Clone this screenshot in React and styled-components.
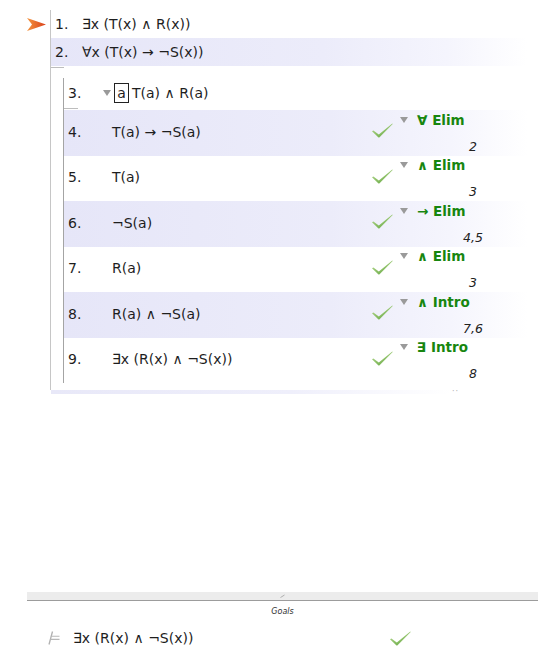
import React from "react";
import styled, { createGlobalStyle } from "styled-components";

const GlobalStyle = createGlobalStyle`
  html, body { margin: 0; padding: 0; background: #ffffff; }
  body { font-family: "DejaVu Sans", "Liberation Sans", sans-serif; color: #1e1e1e; }
`;

const BAND = "linear-gradient(90deg, #e6e6f8 0%, #ececfa 55%, #f5f5fd 80%, rgba(255,255,255,0) 96%)";

const Frame = styled.div`
  width: 555px;
  height: 665px;
  display: flex;
  flex-direction: column;
  overflow: hidden;
  background: #fff;
`;

const ProofPane = styled.div`
  flex: 1;
  padding: 10px 0 0 50px;
  display: flex;
  flex-direction: column;
`;

const Proof = styled.div`
  position: relative;
  width: 496px;
  border-left: 1px solid #c6c6c6;
  display: flex;
  flex-direction: column;
  padding-bottom: 7px;
`;

const Marker = styled.svg`
  position: absolute;
  left: -24px;
  top: 8px;
`;

const Row = styled.div`
  display: flex;
  align-items: center;
  height: ${(p) => p.$h}px;
  background: ${(p) => (p.$band ? BAND : "transparent")};
  font-size: 14px;
  flex-shrink: 0;
`;

const Num = styled.div`
  width: ${(p) => p.$w}px;
  padding-left: 4px;
  box-sizing: border-box;
  flex-shrink: 0;
  align-self: center;
  padding-bottom: ${(p) => (p.$lift ? 2 : 0)}px;
`;

const Formula = styled.div`
  width: ${(p) => p.$w}px;
  flex-shrink: 0;
  white-space: nowrap;
  align-self: center;
  display: flex;
  align-items: center;
  padding-bottom: ${(p) => (p.$lift ? 2 : 0)}px;
`;

const Bar = styled.div`
  width: ${(p) => p.$w}px;
  height: 1px;
  background: #bdbdbd;
  margin: ${(p) => p.$m};
  flex-shrink: 0;
`;

const Subproof = styled.div`
  margin-left: 12px;
  border-left: 1px solid #a4a4a4;
  display: flex;
  flex-direction: column;
`;

const Toggle = styled.svg`
  flex-shrink: 0;
  margin-right: ${(p) => p.$mr}px;
`;

const VarBox = styled.span`
  display: inline-flex;
  align-items: center;
  justify-content: center;
  width: 15px;
  height: 20px;
  box-sizing: border-box;
  border: 1px solid #222;
  margin-right: 3px;
`;

const CheckCell = styled.div`
  width: 26px;
  flex-shrink: 0;
  padding-top: 13px;
  align-self: flex-start;
  display: flex;
`;

const RuleBlock = styled.div`
  width: 148px;
  flex-shrink: 0;
  align-self: stretch;
  display: flex;
  flex-direction: column;
  justify-content: space-between;
  padding: 1px 0 2px 2px;
  box-sizing: border-box;
`;

const RuleName = styled.div`
  display: flex;
  align-items: center;
  height: 17px;
  color: #17860f;
  font-weight: bold;
  font-size: 13.5px;
  white-space: nowrap;
`;

const RuleRefs = styled.div`
  text-align: center;
  font-style: italic;
  font-size: 12.5px;
  height: 15px;
  line-height: 15px;
  color: #222;
`;

const HScroll = styled.div`
  margin-left: 1px;
  width: 400px;
  height: 4px;
  display: flex;
  align-items: center;
  justify-content: flex-end;
  background: linear-gradient(90deg, #e8e8f8 0%, #efeffb 60%, rgba(255,255,255,0) 100%);
`;

const Dots = styled.span`
  font-size: 8px;
  line-height: 4px;
  color: #b0b0b0;
  margin-right: -8px;
  letter-spacing: 1px;
`;

const Divider = styled.div`
  margin-left: 27px;
  width: 511px;
  height: 8px;
  background: #ececec;
  border-bottom: 1.5px solid #9c9c9c;
  display: flex;
  justify-content: center;
  align-items: center;
  flex-shrink: 0;
`;

const GoalsPane = styled.div`
  height: 64px;
  display: flex;
  flex-direction: column;
  flex-shrink: 0;
`;

const GoalsLabel = styled.div`
  height: 18px;
  padding-left: 10px;
  font-size: 8px;
  font-style: italic;
  text-align: center;
  line-height: 22px;
  color: #333;
`;

const GoalRow = styled.div`
  display: flex;
  align-items: center;
  height: 38px;
  padding-left: 48px;
  font-size: 14px;
`;

const Turnstile = styled.svg`
  flex-shrink: 0;
  margin-right: 13px;
`;

const GoalFormula = styled.div`
  width: 317px;
  flex-shrink: 0;
  white-space: nowrap;
`;

let gid = 0;
function Check() {
  const id = React.useMemo(() => `ck${gid++}`, []);
  return (
    <svg width="21" height="15" viewBox="0 0 21 15">
      <defs>
        <linearGradient id={id} x1="0" y1="0" x2="0.6" y2="1">
          <stop offset="0" stopColor="#c2e09a" />
          <stop offset="1" stopColor="#6fae4c" />
        </linearGradient>
      </defs>
      <path d="M0 8.2 L1.4 7.6 L6.8 11.4 L20.3 0.4 L20.7 0.9 L7.3 14.5 L6.5 14.5 Z" fill={`url(#${id})`} />
    </svg>
  );
}

function Tri({ mr = 0 }) {
  return (
    <Toggle $mr={mr} width="8" height="6" viewBox="0 0 8 6">
      <path d="M0 0 L8 0 L4 6 Z" fill="#9a9a9a" />
    </Toggle>
  );
}

const steps = [
  { n: "4.", f: "T(a) → ¬S(a)", rule: "∀ Elim", refs: "2", band: true },
  { n: "5.", f: "T(a)", rule: "∧ Elim", refs: "3", band: false },
  { n: "6.", f: "¬S(a)", rule: "→ Elim", refs: "4,5", band: true },
  { n: "7.", f: "R(a)", rule: "∧ Elim", refs: "3", band: false },
  { n: "8.", f: "R(a) ∧ ¬S(a)", rule: "∧ Intro", refs: "7,6", band: true },
  { n: "9.", f: "∃x (R(x) ∧ ¬S(x))", rule: "∃ Intro", refs: "8", band: false },
];

export default function App() {
  return (
    <Frame>
      <GlobalStyle />
      <ProofPane>
        <Proof>
          <Marker width="19" height="13" viewBox="0 0 19 13">
            <defs>
              <linearGradient id="mk" x1="0" y1="0" x2="1" y2="0">
                <stop offset="0" stopColor="#f4943e" />
                <stop offset="1" stopColor="#d9401a" />
              </linearGradient>
            </defs>
            <path d="M0 0 L19 6.5 L0 13 L5 6.5 Z" fill="url(#mk)" />
          </Marker>
          <Row $h={28}>
            <Num $w={31}>1.</Num>
            <Formula $w={300}>∃x (T(x) ∧ R(x))</Formula>
          </Row>
          <Row $h={28} $band>
            <Num $w={31}>2.</Num>
            <Formula $w={300}>∀x (T(x) → ¬S(x))</Formula>
          </Row>
          <Bar $w={13} $m="1px 0 10px 0" />
          <Subproof>
            <Row $h={30}>
              <Num $w={39}>3.</Num>
              <Formula $w={300}>
                <Tri mr={3} />
                <VarBox>a</VarBox>
                T(a) ∧ R(a)
              </Formula>
            </Row>
            <Bar $w={14} $m="0 0 1px 0" />
            {steps.map((s) => (
              <Row key={s.n} $h={45.5} $band={s.band}>
                <Num $w={48} $lift>{s.n}</Num>
                <Formula $w={260} $lift>{s.f}</Formula>
                <CheckCell>
                  <Check />
                </CheckCell>
                <RuleBlock>
                  <RuleName>
                    <Tri mr={9} />
                    {s.rule}
                  </RuleName>
                  <RuleRefs>{s.refs}</RuleRefs>
                </RuleBlock>
              </Row>
            ))}
          </Subproof>
        </Proof>
        <HScroll>
          <Dots>··</Dots>
        </HScroll>
      </ProofPane>
      <Divider>
        <svg width="5" height="4" viewBox="0 0 5 4">
          <path d="M0.5 3.5 L4.5 1" fill="none" stroke="#a0a0a0" strokeWidth="0.8" />
        </svg>
      </Divider>
      <GoalsPane>
        <GoalsLabel>Goals</GoalsLabel>
        <GoalRow>
          <Turnstile width="12" height="14" viewBox="0 0 12 14">
            <path d="M1 13.5 L4.5 0.5" stroke="#b0b0b0" strokeWidth="1.3" fill="none" />
            <path d="M3.2 5.2 H11.5 M2.4 8.4 H11.5" stroke="#b8b8b8" strokeWidth="1.1" fill="none" />
          </Turnstile>
          <GoalFormula>∃x (R(x) ∧ ¬S(x))</GoalFormula>
          <Check />
        </GoalRow>
      </GoalsPane>
    </Frame>
  );
}
